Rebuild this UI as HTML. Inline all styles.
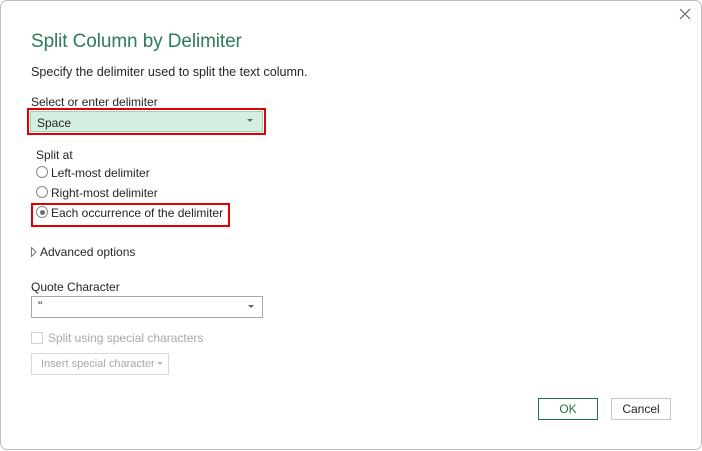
<!DOCTYPE html>
<html><head><meta charset="utf-8"><style>
*{margin:0;padding:0;box-sizing:border-box}
body{width:702px;height:451px;background:#fff;font-family:"Liberation Sans",sans-serif;color:#252525;overflow:hidden;position:relative}
.win{position:absolute;left:0;top:0;width:702px;height:450px;border:1px solid #bdbdbd;border-radius:7px;background:#fff}
.t{position:absolute;white-space:nowrap;font-size:12px}
.radio{position:absolute;width:12px;height:12px;border:1px solid #8a8a8a;border-radius:50%;background:#fff}
.radio.on::after{content:"";position:absolute;left:2.5px;top:2.5px;width:5px;height:5px;border-radius:50%;background:#707070}
.btn{position:absolute;height:22px;border:1px solid #c6c6c6;background:#fff;font-size:12px;text-align:center;line-height:20px}
</style></head><body>
<div class="win"></div>
<svg style="position:absolute;left:679px;top:8px" width="12" height="12"><path d="M1 1L11 11M11 1L1 11" stroke="#666" stroke-width="1.2"/></svg>
<div class="t" style="left:31px;top:31px;font-size:19px;color:#2e7b57;letter-spacing:-0.1px">Split Column by Delimiter</div>
<div class="t" style="left:31px;top:65px;font-size:12.6px">Specify the delimiter used to split the text column.</div>
<div class="t" style="left:31px;top:95px">Select or enter delimiter</div>
<div style="position:absolute;left:27px;top:108px;width:239px;height:27px;border:2px solid #e00000"></div>
<div style="position:absolute;left:30px;top:111px;width:233px;height:21px;border:1px solid #9fd3b6;background:#d5efe1"></div>
<div class="t" style="left:37px;top:116px">Space</div>
<svg style="position:absolute;left:247px;top:119px" width="6" height="4"><path d="M0 0H6L3 3Z" fill="#666"/></svg>
<div class="t" style="left:36px;top:148px">Split at</div>
<div class="radio" style="left:36px;top:166px"></div>
<div class="t" style="left:51px;top:166px">Left-most delimiter</div>
<div class="radio" style="left:36px;top:186px"></div>
<div class="t" style="left:51px;top:186px">Right-most delimiter</div>
<div style="position:absolute;left:31px;top:203px;width:199px;height:24px;border:2px solid #e00000"></div>
<div class="radio on" style="left:36px;top:206px"></div>
<div class="t" style="left:51px;top:206px">Each occurrence of the delimiter</div>
<svg style="position:absolute;left:31px;top:247px" width="6" height="10"><path d="M0.5 0.5L5 5L0.5 9.5Z" fill="none" stroke="#777"/></svg>
<div class="t" style="left:40px;top:245px">Advanced options</div>
<div class="t" style="left:31px;top:280px">Quote Character</div>
<div style="position:absolute;left:31px;top:296px;width:232px;height:22px;border:1px solid #a8a8a8"></div>
<div class="t" style="left:38px;top:299px">"</div>
<svg style="position:absolute;left:248px;top:305px" width="6" height="4"><path d="M0 0H6L3 3Z" fill="#666"/></svg>
<div style="position:absolute;left:31px;top:332px;width:12px;height:12px;border:1px solid #cfcfcf"></div>
<div class="t" style="left:48px;top:331px;color:#a8a8a8">Split using special characters</div>
<div class="btn" style="left:31px;top:353px;width:138px;color:#a8a8a8;border-color:#d8d8d8;text-align:left;padding-left:9px;font-size:11px">Insert special character</div>
<svg style="position:absolute;left:157px;top:362px" width="6" height="4"><path d="M0 0H6L3 3Z" fill="#bbb"/></svg>
<div class="btn" style="left:538px;top:398px;width:60px;border-color:#217346;color:#217346">OK</div>
<div class="btn" style="left:611px;top:398px;width:60px">Cancel</div>
</body></html>
